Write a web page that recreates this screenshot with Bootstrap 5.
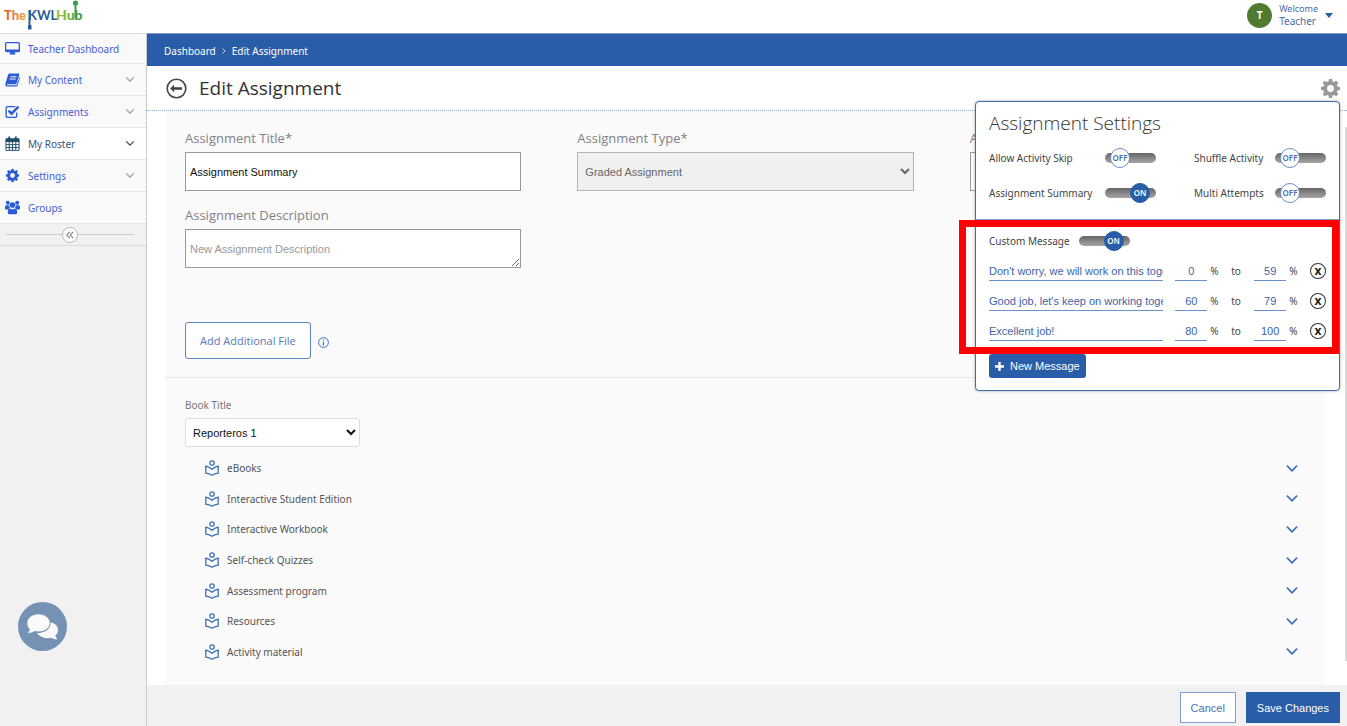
<!DOCTYPE html>
<html lang="en">
<head>
<meta charset="utf-8">
<meta name="viewport" content="width=device-width, initial-scale=1">
<title>Edit Assignment - The KWL Hub</title>
<link href="https://cdn.jsdelivr.net/npm/bootstrap@5.3.0/dist/css/bootstrap.min.css" rel="stylesheet">
<style>
:root { --kwl-blue: #2a5da8; --kwl-link: #4560d8; --kwl-grey: #f1f1f1; --kwl-panel: #fafafa; }
body { font-family: "Noto Sans", "Open Sans", sans-serif; font-size: 10px; line-height: 16px; color: #444; background: #fff; }
a { text-decoration: none; }
button, input, select, textarea { font-family: inherit; font-size: inherit; }
.arial { font-family: "Liberation Sans", Arial, sans-serif; font-size: 11px; }
.topbar { height: 33px; }
.avatar { width: 25px; height: 25px; background: #4f7a2f; margin-right: 7px; }
.user { color: #4a6da7; line-height: 13px; margin-right: 14px; padding-bottom: 3px; }
.user .hello { font-size: 9px; }
.caret { border: 4px solid transparent; border-top: 5px solid var(--kwl-blue); border-bottom: 0; margin-left: 7px; }
.side { width: 147px; background: var(--kwl-grey); border-right: 1px solid #ccc; border-top: 1px solid #ddd; }
.side-link { height: 32px; padding: 0 11px 0 5px; background: #f9f9f9; border-bottom: 1px solid #e6e6e6; color: var(--kwl-link); }
.side-link:first-child { height: 30px; }
.side-link .glyph { width: 15px; height: 15px; margin-right: 8px; color: #2b5bd7; flex: none; }
.side-link .chev { color: #999; }
.side-link.active { background: #fff; color: #34557d; }
.side-link.active .glyph, .side-link.active .chev { color: #1f4a68; }
.collapse-row { height: 22px; border-bottom: 1px solid #ddd; padding: 0 12px 0 6px; }
.collapse-row::before, .collapse-row::after { content: ""; flex: 1; border-top: 1px solid #ccc; }
.collapse-btn { width: 16px; height: 16px; border: 1px solid #bbb; color: #888; }
.crumbs { height: 33px; background: var(--kwl-blue); border-top: 1px solid #7d9cc9; padding: 2px 17px 0; }
.crumbs a, .crumbs span { color: #fff; }
.crumbs svg { margin: 0 6px; }
.titlebar { height: 45px; padding: 0 7px 0 19px; border-bottom: 1px dotted #8fabd3; }
.titlebar h1, .settings h2 { font-family: "Open Sans", sans-serif; font-size: 19px; line-height: 24px; color: #333; }
.titlebar h1 { font-weight: 400; }
.body-area { padding: 0 22px 0 19px; }
.panel { background: var(--kwl-panel); }
.pad { padding: 0 19px; }
.scroll-thumb { top: 16px; right: 0; bottom: 24px; width: 2px; background: #dcdcdc; }
.fields { --bs-gutter-x: 56px; padding-top: 18px; }
.fields + .fields { padding-top: 15px; }
.fields label { font-family: "Open Sans", sans-serif; font-size: 13px; line-height: 18px; color: #808286; margin-bottom: 5px; }
.field-box { display: block; width: 100%; height: 39px; padding: 0 4px; background: #fff; border: 1px solid #999; color: #111; border-radius: 0; }
textarea.field-box { padding-top: 11px; }
textarea.field-box::placeholder { color: #999; }
.fields select.field-box { padding: 0 3px; }
select.field-box:disabled { background: #f0f0f0; border-color: #b5b5b5; color: #666; opacity: 1; }
.file-row { padding: 54px 0 18px; }
.file-btn { height: 37px; padding: 0 14px; font-family: "Open Sans", sans-serif; font-size: 11px; color: #5578b5; background: #fff; border: 1px solid #5d86c6; border-radius: 3px; margin-right: 7px; }
.book { border-top: 1px solid #e8e8e8; padding-bottom: 18px; }
.book label { color: #777; margin: 19px 0 5px; }
.book-select { width: 175px; height: 29px; padding: 0 3px; background: #fff; color: #111; border: 1px solid #ddd; border-radius: 3px; margin-bottom: 6px; }
.res-link { flex: 1; padding: 0 7px 0 19px; color: #555; }
.res-link svg { color: #3d6fb8; }
.res-link svg:first-child { margin-right: 7px; }
.footbar { height: 41px; background: var(--kwl-grey); padding: 0 7px 3px; gap: 10px; }
.foot-btn { height: 31px; padding: 0 10px; border: 1px solid var(--kwl-blue); background: var(--kwl-blue); color: #fff; }
.foot-btn.plain { background: #fff; color: #4a72b2; border-color: #7d9cd0; }
.chat { left: 18px; bottom: 75px; width: 49px; height: 49px; background: #7592b5; }
.settings { top: 68px; right: 7px; width: 365px; padding-bottom: 12px; background: #fff; border: 1px solid #3f6ead; border-radius: 4px; box-shadow: 0 0 3px #0005; z-index: 5; color: #444; }
.settings h2 { font-weight: 300; margin: 9px 0 5px; }
.in { padding: 0 13px; }
.opt { height: 35px; }
.opt .l { width: 167px; }
.opt .r { width: 132px; }
.track { width: 51px; height: 10px; border-radius: 5px; background: linear-gradient(#666, #a5a5a5); }
.knob { left: 5px; top: -5px; width: 20px; height: 20px; border-radius: 50%; border: 1px solid #6a8fc8; background: #fff; color: #4a6da7; font-size: 8px; font-weight: 600; line-height: 18px; text-align: center; }
.knob.on { display: none; left: 25px; background: var(--kwl-blue); border-color: var(--kwl-blue); color: #fff; }
input:checked + .track .on { display: block; }
input:checked + .track .off { display: none; }
.custom { border-top: 1px solid #7d9cc9; margin-top: 9px; padding-top: 5px; }
.custom .toggle-row { padding: 8px 0 7px; gap: 9px; }
.spot { top: 0; left: -17px; right: 0; height: 134px; border: 7px solid #f00; pointer-events: none; }
.msg { height: 30px; }
.line-box { height: 19px; padding: 0; border: 0; border-bottom: 1px solid #6a90cc; color: #3c64a6; background: transparent; border-radius: 0; }
.line-box.text { width: 175px; margin-right: 12px; }
.line-box.num { width: 32px; text-align: center; margin-right: 3px; }
.del-btn { width: 16px; height: 16px; border: 1px solid #333; color: #222; background: #fff; font-size: 12px; line-height: 12px; font-weight: 700; }
.pct { width: 21px; }
.to { width: 23px; }
.new-btn { height: 24px; padding: 0 6px; gap: 6px; background: var(--kwl-blue); color: #fff; border: 0; border-radius: 3px; margin-top: 8px; }
</style>
</head>
<body class="d-flex flex-column min-vh-100">
<svg width="0" height="0" class="position-absolute" aria-hidden="true">
  <symbol id="chev" viewBox="0 0 12 8"><path d="M1.500 1.500 6 6l4.500-4.500" fill="none" stroke="currentColor" stroke-width="1.500"/></symbol>
  <symbol id="gear" viewBox="0 0 16 16"><path fill="currentColor" fill-rule="evenodd" d="M6.700 0h2.600l.4 2.100 1.300.5L12.800 1.400l1.800 1.800-1.200 1.800.5 1.300 2.100.4v2.600l-2.100.4-.5 1.300 1.200 1.800-1.800 1.800-1.800-1.200-1.300.5-.4 2.100H6.700l-.4-2.100-1.300-.5-1.800 1.200-1.800-1.800 1.200-1.800-.5-1.300L0 9.300V6.700l2.100-.4.5-1.300-1.200-1.800 1.800-1.800L5 2.600l1.300-.5zM8 5.100a2.900 2.900 0 1 0 0 5.800 2.900 2.900 0 0 0 0-5.800z"/></symbol>
  <symbol id="reader" viewBox="0 0 14 16"><g fill="none" stroke="currentColor" stroke-width="1.300"><circle cx="7" cy="3" r="2.200"/><path d="M.8 6.200C3 6.500 5.300 7.900 7 9.300c1.700-1.400 4-2.800 6.200-3.100v7C11 13.400 8.700 14 7 15.200 5.300 14 3 13.400.8 13.200z"/></g></symbol>
</svg>

<header class="topbar d-flex align-items-center justify-content-between">
  <a href="#" aria-label="The KWL Hub">
    <svg width="90" height="33" viewBox="0 0 90 33" class="d-block" font-family="Lato, sans-serif" font-weight="700">
      <defs><linearGradient id="warm"><stop offset="0" stop-color="#dc5a34"/><stop offset="1" stop-color="#f0a53a"/></linearGradient><linearGradient id="leaf"><stop offset="0" stop-color="#a3c832"/><stop offset="1" stop-color="#3d9a47"/></linearGradient></defs>
      <text x="4" y="20" font-size="13" font-weight="900" fill="url(#warm)">The</text>
      <text x="28" y="20" font-size="13" fill="#2a5c98">KWL</text>
      <text x="56" y="20" font-size="14" fill="url(#leaf)" font-weight="900">Hub</text>
      <path d="M29.500 10v16" stroke="#2a5c98" stroke-width="2"/><path d="M28 25h3.500v4.500H28z" fill="#2a5c98"/>
      <path d="M75.500 4v15" stroke="#3d9a47" stroke-width="2"/><circle cx="75.500" cy="3" r="2.600" fill="#3d9a47"/>
    </svg>
  </a>
  <a href="#" class="user d-flex align-items-center">
    <span class="avatar rounded-circle text-white fw-bold d-flex align-items-center justify-content-center">T</span>
    <span><span class="hello d-block">Welcome</span><span class="d-block">Teacher</span></span>
    <span class="caret"></span>
  </a>
</header>

<div class="d-flex flex-grow-1">
  <nav class="side flex-shrink-0" aria-label="Main">
    <a href="#" class="side-link d-flex align-items-center"><svg class="glyph" viewBox="0 0 16 16"><rect x=".7" y="1.700" width="14.600" height="9.600" rx="1" fill="none" stroke="currentColor" stroke-width="1.400"/><path d="M.7 9h14.600v2.300H.7zM6 11h4l1 2.500v1H5v-1z" fill="currentColor"/></svg>Teacher Dashboard</a>
    <a href="#" class="side-link d-flex align-items-center"><svg class="glyph" viewBox="0 0 16 16"><path fill="currentColor" fill-rule="evenodd" d="M5 1.500h9.200c.8 0 1.200.6 1 1.300l-2.700 9.200c-.2.600-.7 1-1.400 1H2.700c-.5 0-.8.2-.8.600s.3.600.8.600h9c.5 0 .8-.2 1-.7L15.500 5c.5.3.6.8.4 1.400l-2.400 8c-.2.700-.8 1.100-1.500 1.100H2.500C1 15.500 0 14.200.3 12.700L3.300 3c.2-.9.8-1.500 1.700-1.500zm1.100 3-.3 1H12l.3-1zm-.8 2.500-.3 1h6.200l.3-1z"/></svg>My Content<svg class="chev ms-auto" width="10" height="7"><use href="#chev"/></svg></a>
    <a href="#" class="side-link d-flex align-items-center"><svg class="glyph" viewBox="0 0 16 16"><path d="M12.500 9v3.800c0 .9-.6 1.500-1.500 1.500H2.700c-.9 0-1.500-.6-1.500-1.500V4.200c0-.9.600-1.500 1.500-1.500H11" fill="none" stroke="currentColor" stroke-width="1.400"/><path d="m3.800 7 3.200 3.300 7.400-7.400" fill="none" stroke="currentColor" stroke-width="2.600"/></svg>Assignments<svg class="chev ms-auto" width="10" height="7"><use href="#chev"/></svg></a>
    <a href="#" class="side-link active d-flex align-items-center" aria-current="true"><svg class="glyph" viewBox="0 0 16 16"><path d="M1 3h14v12.300H1zM1 6h14M1 9.200h14M1 12.300h14M4.500 6v9M8 6v9M11.500 6v9" fill="none" stroke="currentColor"/><path d="M1 3h14v3H1zM3.500.5h2v4h-2zM10.500.5h2v4h-2z" fill="currentColor"/></svg>My Roster<svg class="chev ms-auto" width="10" height="7"><use href="#chev"/></svg></a>
    <a href="#" class="side-link d-flex align-items-center"><svg class="glyph" viewBox="-1 -1 18 18"><use href="#gear" width="16" height="16"/></svg>Settings<svg class="chev ms-auto" width="10" height="7"><use href="#chev"/></svg></a>
    <a href="#" class="side-link d-flex align-items-center"><svg class="glyph" viewBox="0 0 16 16" fill="currentColor"><circle cx="3" cy="3" r="2.100"/><circle cx="13" cy="3" r="2.100"/><circle cx="8" cy="5.300" r="3"/><path d="M0 9V7.500C0 6.300.8 5.600 2 5.600h2.300A4 4 0 0 0 5.500 8.500C4.500 8.700 4 9.200 3.600 10H1C.4 10 0 9.600 0 9zM16 9V7.500c0-1.200-.8-1.900-2-1.900h-2.300a4 4 0 0 1-1.200 2.900c1 .2 1.500.7 1.900 1.500H15c.6 0 1-.4 1-1zM3 13.200C3 10.500 4 9 5.500 9c.8.600 1.600.9 2.500.9S9.700 9.600 10.500 9C12 9 13 10.500 13 13.200c0 1.300-.8 2.100-2 2.100H5c-1.200 0-2-.8-2-2.100z"/></svg>Groups</a>
    <div class="collapse-row d-flex align-items-center"><button type="button" class="collapse-btn rounded-circle bg-white p-0 d-flex align-items-center justify-content-center" aria-label="Collapse menu"><svg width="8" height="8" viewBox="0 0 8 8"><path d="M3.800.8.8 4l3 3.200M7.200.8l-3 3.200 3 3.200" fill="none" stroke="currentColor" stroke-width="1.200"/></svg></button></div>
  </nav>

  <main class="d-flex flex-column flex-grow-1 position-relative">
    <nav class="crumbs d-flex align-items-center" aria-label="Breadcrumb"><a href="#">Dashboard</a><svg width="4" height="6" viewBox="0 0 4 6"><path d="m.5.500 2.500 2.500L.5 5.500" fill="none" stroke="#c5d3e8"/></svg><span>Edit Assignment</span></nav>
    <div class="titlebar d-flex align-items-center">
      <a href="#" aria-label="Back"><svg class="d-block" width="21" height="21" viewBox="0 0 21 21"><circle cx="10.500" cy="10.500" r="9.300" fill="none" stroke="#444" stroke-width="1.600"/><path d="M8 6.800v2.500h8v2.400H8v2.500l-3.800-3.700z" fill="#444"/></svg></a>
      <h1 class="mb-0 ms-2 ps-1">Edit Assignment</h1>
      <button type="button" class="ms-auto border-0 bg-transparent p-0" aria-label="Assignment settings"><svg class="d-block" width="19" height="19" color="#999"><use href="#gear"/></svg></button>
    </div>

    <div class="body-area d-flex flex-column flex-grow-1 position-relative">
      <div class="scroll-thumb position-absolute"></div>
      <form class="panel d-flex flex-column flex-grow-1" id="editForm">
        <div class="pad">
          <div class="row fields">
            <div class="col-4"><label class="d-block" for="title">Assignment Title*</label><input id="title" class="field-box arial" value="Assignment Summary"></div>
            <div class="col-4"><label class="d-block" for="type">Assignment Type*</label><select id="type" class="field-box arial" disabled><option>Graded Assignment</option></select></div>
            <div class="col-4"><label class="d-block" for="third">A</label><input id="third" class="field-box arial"></div>
          </div>
          <div class="row fields">
            <div class="col-4"><label class="d-block" for="desc">Assignment Description</label><textarea id="desc" class="field-box arial" placeholder="New Assignment Description"></textarea></div>
          </div>
          <div class="file-row d-flex align-items-center">
            <button type="button" class="file-btn">Add Additional File</button>
            <svg class="mt-1" width="11" height="11" viewBox="0 0 11 11"><circle cx="5.500" cy="5.500" r="4.900" fill="none" stroke="#3d74bd"/><path d="M5.500 2.400v1.400M5.500 4.700v3.800" stroke="#3d74bd" stroke-width="1.200"/></svg>
          </div>
        </div>
        <div class="book pad d-flex flex-column flex-grow-1">
          <label for="book">Book Title</label>
          <select id="book" class="book-select arial"><option>Reporteros 1</option></select>
          <div class="d-flex flex-column flex-grow-1">
            <a href="#" class="res-link d-flex align-items-center"><svg width="16" height="16"><use href="#reader"/></svg>eBooks<svg class="ms-auto" width="14" height="9"><use href="#chev"/></svg></a>
            <a href="#" class="res-link d-flex align-items-center"><svg width="16" height="16"><use href="#reader"/></svg>Interactive Student Edition<svg class="ms-auto" width="14" height="9"><use href="#chev"/></svg></a>
            <a href="#" class="res-link d-flex align-items-center"><svg width="16" height="16"><use href="#reader"/></svg>Interactive Workbook<svg class="ms-auto" width="14" height="9"><use href="#chev"/></svg></a>
            <a href="#" class="res-link d-flex align-items-center"><svg width="16" height="16"><use href="#reader"/></svg>Self-check Quizzes<svg class="ms-auto" width="14" height="9"><use href="#chev"/></svg></a>
            <a href="#" class="res-link d-flex align-items-center"><svg width="16" height="16"><use href="#reader"/></svg>Assessment program<svg class="ms-auto" width="14" height="9"><use href="#chev"/></svg></a>
            <a href="#" class="res-link d-flex align-items-center"><svg width="16" height="16"><use href="#reader"/></svg>Resources<svg class="ms-auto" width="14" height="9"><use href="#chev"/></svg></a>
            <a href="#" class="res-link d-flex align-items-center"><svg width="16" height="16"><use href="#reader"/></svg>Activity material<svg class="ms-auto" width="14" height="9"><use href="#chev"/></svg></a>
          </div>
        </div>
      </form>
    </div>

    <footer class="footbar d-flex align-items-end justify-content-end">
      <button type="button" class="foot-btn plain arial">Cancel</button>
      <button type="submit" form="editForm" class="foot-btn arial">Save Changes</button>
    </footer>

    <section class="settings position-absolute" aria-labelledby="setHead">
      <div class="in">
        <h2 id="setHead">Assignment Settings</h2>
        <div class="opt d-flex justify-content-between align-items-center">
          <label class="l d-flex justify-content-between align-items-center">Allow Activity Skip<input type="checkbox" class="visually-hidden"><span class="track position-relative"><span class="knob off position-absolute">OFF</span><span class="knob on position-absolute">ON</span></span></label>
          <label class="r d-flex justify-content-between align-items-center">Shuffle Activity<input type="checkbox" class="visually-hidden"><span class="track position-relative"><span class="knob off position-absolute">OFF</span><span class="knob on position-absolute">ON</span></span></label>
        </div>
        <div class="opt d-flex justify-content-between align-items-center">
          <label class="l d-flex justify-content-between align-items-center">Assignment Summary<input type="checkbox" class="visually-hidden" checked><span class="track position-relative"><span class="knob off position-absolute">OFF</span><span class="knob on position-absolute">ON</span></span></label>
          <label class="r d-flex justify-content-between align-items-center">Multi Attempts<input type="checkbox" class="visually-hidden"><span class="track position-relative"><span class="knob off position-absolute">OFF</span><span class="knob on position-absolute">ON</span></span></label>
        </div>
      </div>
      <div class="custom in position-relative">
        <div class="spot position-absolute"></div>
        <label class="toggle-row d-flex align-items-center">Custom Message<input type="checkbox" class="visually-hidden" checked><span class="track position-relative"><span class="knob off position-absolute">OFF</span><span class="knob on position-absolute">ON</span></span></label>
        <div class="msg d-flex align-items-center"><input class="line-box text arial" aria-label="Message 1" value="Don't worry, we will work on this together"><input class="line-box num arial" aria-label="From 1" value="0"><span class="pct">%</span><span class="to">to</span><input class="line-box num arial" aria-label="Up to 1" value="59"><span class="pct">%</span><button type="button" class="del-btn rounded-circle p-0" aria-label="Delete message 1">x</button></div>
        <div class="msg d-flex align-items-center"><input class="line-box text arial" aria-label="Message 2" value="Good job, let's keep on working together"><input class="line-box num arial" aria-label="From 2" value="60"><span class="pct">%</span><span class="to">to</span><input class="line-box num arial" aria-label="Up to 2" value="79"><span class="pct">%</span><button type="button" class="del-btn rounded-circle p-0" aria-label="Delete message 2">x</button></div>
        <div class="msg d-flex align-items-center"><input class="line-box text arial" aria-label="Message 3" value="Excellent job!"><input class="line-box num arial" aria-label="From 3" value="80"><span class="pct">%</span><span class="to">to</span><input class="line-box num arial" aria-label="Up to 3" value="100"><span class="pct">%</span><button type="button" class="del-btn rounded-circle p-0" aria-label="Delete message 3">x</button></div>
        <button type="button" class="new-btn arial d-flex align-items-center"><svg width="9" height="9" viewBox="0 0 9 9"><path d="M4.500 0v9M0 4.500h9" stroke="#fff" stroke-width="2.400"/></svg>New Message</button>
      </div>
    </section>
  </main>
</div>

<button type="button" class="chat position-fixed border-0 rounded-circle p-0 d-flex align-items-center justify-content-center" aria-label="Open chat"><svg width="33" height="28" viewBox="0 0 33 28"><path d="M24.500 9.500C29 10 32 13 32 17c0 2.300-1 4.200-2.700 5.600.3 1.500 1.200 2.700 2.400 3.700-2.300.2-4.300-.4-6-1.600-6 1.400-12-.2-14.700-4.600C19 20 24.800 16 24.500 9.500z" fill="#fafafa"/><path d="M12.500 1C19 1 24 5 24 10s-5 8.800-11.500 8.800c-1.300 0-2.600-.2-3.800-.5C6.600 19.700 4 20.600 1.200 20.200c1.300-1 2.100-2.200 2.400-3.700C1.800 14.800 1 12.500 1 10 1 5 6 1 12.500 1z" fill="#fafafa" stroke="#7592b5" stroke-width=".6"/></svg></button>
<script src="https://cdn.jsdelivr.net/npm/bootstrap@5.3.0/dist/js/bootstrap.bundle.min.js"></script>
</body>
</html>
